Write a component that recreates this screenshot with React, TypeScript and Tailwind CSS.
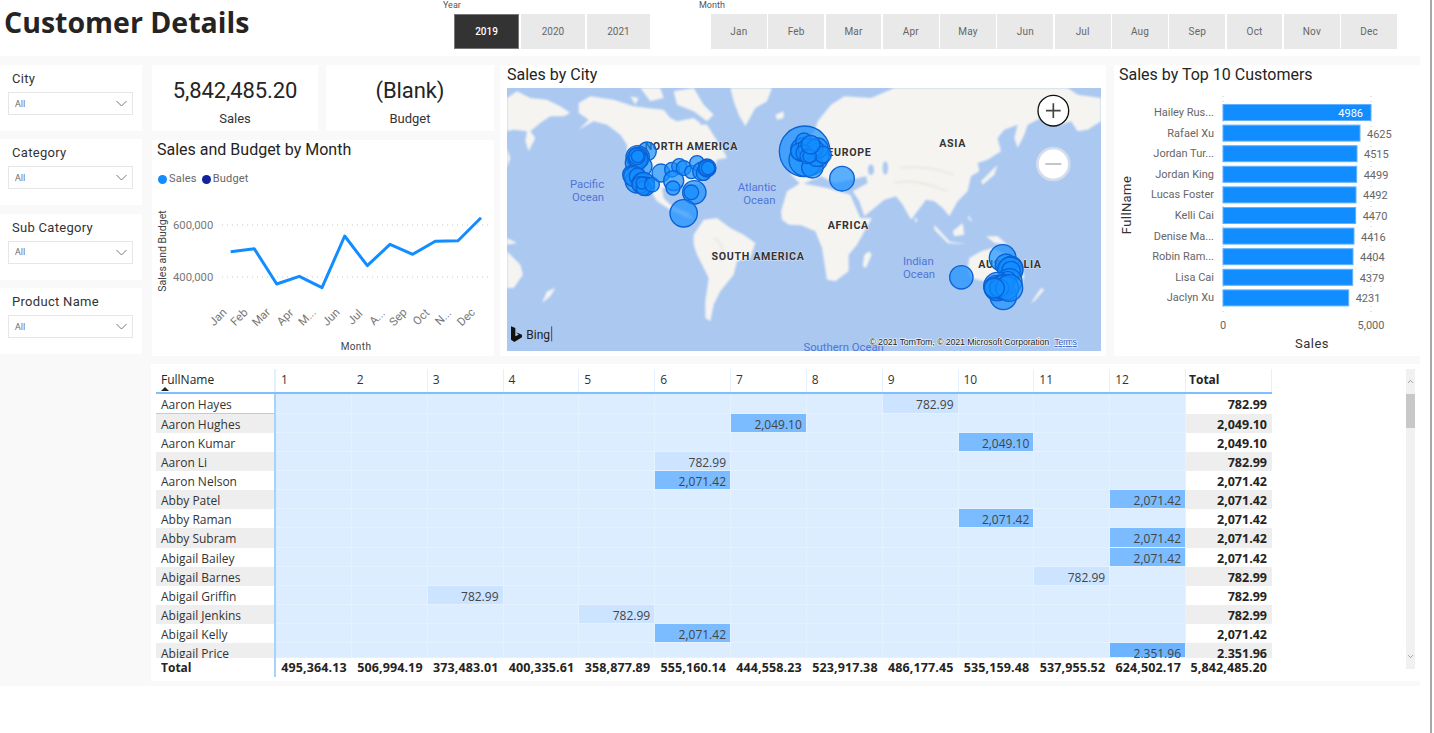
import { ChevronUp, ChevronDown } from "lucide-react";

const din = "font-[Roboto,sans-serif]";
const seg = "font-['Open_Sans',sans-serif]";

const months = ["Jan", "Feb", "Mar", "Apr", "May", "Jun", "Jul", "Aug", "Sep", "Oct", "Nov", "Dec"];

function Slicer({ title }: { title: string }) {
  return (
    <div className="h-[66px] bg-white pl-2 pr-[9px] pt-[5px]">
      <div className={`${din} pl-1 text-[13px] leading-[17px] tracking-[0.3px] text-[#333]`}>{title}</div>
      <div className="mt-[5px] flex h-[23px] items-center justify-between border border-[#e6e6e6] pl-[6px] pr-[5px]">
        <span className={`${seg} text-[9px] text-[#666]`}>All</span>
        <svg width="11" height="7" viewBox="0 0 11 7" fill="none" stroke="#777" strokeWidth="1">
          <path d="M0.5 1 L5.5 6 L10.5 1" />
        </svg>
      </div>
    </div>
  );
}

function Kpi({ value, label, className }: { value: string; label: string; className: string }) {
  return (
    <div className={`${din} flex h-[66px] flex-col items-center bg-white text-[#252423] ${className}`}>
      <div className="mt-[10px] text-[22px] leading-[32px] tracking-[-0.1px]">{value}</div>
      <div className="mt-[4px] text-[13px] leading-[16px] text-[#333]">{label}</div>
    </div>
  );
}

const linePts =
  "230.7,251.7 254.3,248.7 276.7,284 299.3,276.3 322,287.7 344.7,236 367.3,265.7 390,244.3 412.7,254.3 435.3,241.3 458,240.7 481,217.7";
const monthLabels: [string, number][] = [
  ["Jan", 218], ["Feb", 239], ["Mar", 261], ["Apr", 285], ["M...", 307], ["Jun", 331],
  ["Jul", 355], ["A...", 377], ["Sep", 398], ["Oct", 421], ["N...", 443], ["Dec", 466],
];

function LineChart() {
  return (
    <div className={`${din} h-[216px] bg-white`}>
      <div className="h-[24px] pl-[5px] text-[16px] leading-[20px] text-[#252423]">Sales and Budget by Month</div>
      <div className="flex h-[30px] items-center pl-[6px] text-[11px] tracking-[0.2px] text-[#666]">
        <span className="h-[9px] w-[9px] rounded-full bg-[#118dff]" />
        <span className="ml-[2px]">Sales</span>
        <span className="ml-[5px] h-[9px] w-[9px] rounded-full bg-[#12239e]" />
        <span className="ml-[2px]">Budget</span>
      </div>
      <svg width="342" height="162" viewBox="152 194 342 162" className="block">
        <line x1="222" y1="225" x2="488" y2="225" stroke="#c8c8c8" strokeDasharray="1 4" />
        <line x1="222" y1="277" x2="488" y2="277" stroke="#c8c8c8" strokeDasharray="1 4" />
        <text x="173" y="229" fontSize="11.3" fill="#777">600,000</text>
        <text x="173" y="281" fontSize="11.3" fill="#777">400,000</text>
        <text x="166" y="251" fontSize="10.5" fill="#444" textAnchor="middle" transform="rotate(-90 166 251)">Sales and Budget</text>
        <polyline points={linePts} fill="none" stroke="#118dff" strokeWidth="3" strokeLinejoin="round" />
        {monthLabels.map(([m, x]) => (
          <text key={m} x={x} y="321" fontSize="11.5" fill="#777" textAnchor="middle" transform={`rotate(-45 ${x} 317)`}>{m}</text>
        ))}
        <text x="356" y="350" fontSize="10" fill="#444" textAnchor="middle" letterSpacing="0.4">Month</text>
      </svg>
    </div>
  );
}

type C = [number, number, number];
const bubbles: C[] = [
  [420, 190, 28], [392, 208, 35], [385, 225, 30], [405, 235, 30], [392, 208, 30], [395, 215, 28], [390, 205, 25], [392, 205, 19], [375, 260, 28],
  [390, 280, 35], [380, 265, 30], [392, 265, 25], [405, 285, 30], [410, 285, 32], [415, 295, 28], [400, 290, 25], [410, 300, 22], [405, 285, 18], [435, 290, 22],
  [462, 255, 27], [495, 245, 22], [517, 235, 23], [500, 278, 30], [530, 240, 22], [498, 300, 21], [553, 252, 20],
  [570, 225, 22], [585, 250, 28], [590, 255, 22], [600, 240, 27], [600, 240, 24], [603, 240, 20], [562, 313, 35], [553, 313, 22], [530, 376, 41],
  [893, 190, 76], [896, 215, 50], [916, 238, 32], [886, 185, 35], [916, 190, 30], [931, 200, 35], [891, 160, 25], [876, 190, 25], [901, 180, 28], [933, 180, 30],
  [923, 180, 25], [948, 200, 25], [891, 195, 24], [901, 205, 22], [908, 205, 20], [911, 170, 28],
  [1005, 272, 37], [1363, 568, 35],
  [1487, 510, 40], [1497, 530, 32], [1512, 540, 35], [1510, 545, 38], [1512, 548, 28], [1507, 580, 38], [1502, 575, 25], [1489, 625, 40],
  [1472, 595, 42], [1470, 600, 38], [1482, 598, 35], [1490, 590, 30], [1500, 600, 35], [1477, 600, 28], [1507, 600, 40], [1462, 600, 30],
];

const land = [
  // far east russia, left edge
  "0,30 30,10 70,30 120,35 160,55 190,75 170,85 130,85 100,105 70,130 85,150 65,190 55,160 60,130 20,125 0,130",
  // north america
  "215,45 250,25 320,35 380,55 420,60 470,65 490,90 510,100 560,90 580,105 575,130 570,110 600,110 625,150 650,190 660,210 630,215 620,250 590,280 560,290 530,290 490,300 465,300 470,330 490,350 510,360 545,375 560,395 530,385 490,365 450,340 420,290 380,250 360,210 360,170 340,140 300,110 260,100 215,125 245,95 215,75",
  "400,0 460,0 470,30 430,40", "500,10 560,0 590,50 620,80 600,100 560,70 510,50", "370,25 395,30 385,50",
  // greenland, iceland
  "670,0 795,0 780,40 745,60 715,115 695,80 680,40", "805,80 830,70 830,90 810,95",
  // south america
  "560,440 590,395 630,390 670,420 710,440 745,465 730,510 690,520 680,560 640,610 620,650 610,700 595,690 595,640 605,570 570,500 560,470",
  // africa, madagascar
  "822,370 840,310 880,285 960,300 1030,320 1060,390 1095,390 1050,470 1025,500 1025,550 985,580 960,575 945,480 925,430 882,412 845,410 825,395",
  "1087,490 1094,500 1077,540 1067,535 1072,500",
  // eurasia
  "852,260 847,200 882,180 922,130 932,100 972,50 1012,25 1092,30 1162,0 1682,0 1712,20 1782,30 1782,100 1742,125 1712,130 1692,100 1662,110 1602,90 1562,110 1552,140 1532,180 1522,150 1532,110 1492,125 1472,150 1482,190 1442,215 1412,225 1417,250 1392,265 1382,310 1352,340 1327,385 1307,360 1282,340 1257,335 1212,395 1187,350 1167,325 1132,335 1072,385 1057,340 1037,310 1082,285 1077,265 1032,275 982,285 942,265 882,290",
  // japan
  "1472,230 1462,260 1427,290 1422,280 1452,250",
  // islands
  "1282,410 1332,465 1322,465 1282,425", "1337,430 1367,405 1372,440 1342,445", "1322,460 1382,468 1322,466",
  "1437,445 1472,445 1502,470 1462,465", "1382,380 1397,400 1385,395", "1222,388 1232,395 1226,405",
  // australia, nz
  "1387,510 1422,490 1457,480 1522,510 1552,560 1542,600 1502,620 1472,600 1432,580 1392,570 1382,540",
  "1602,600 1612,605 1582,640 1572,645", "0,490 40,530 48,560 20,600 0,600", "145,600 130,625 105,645 120,610",
  "0,450 30,465 0,470", "0,180 10,210 0,240",
];

function MapLabel({ x, y, children }: { x: number; y: number; children: string }) {
  return (
    <text x={x} y={y} textAnchor="middle" fontSize="32" fontWeight="700" fill="#333" letterSpacing="2" stroke="#fff" strokeWidth="3" paintOrder="stroke" strokeOpacity="0.6">
      {children}
    </text>
  );
}

function OceanLabel({ x, y, children }: { x: number; y: number; children: string }) {
  return <text x={x} y={y} textAnchor="middle" fontSize="34" fill="#4f76d6">{children}</text>;
}

function WorldMap() {
  return (
    <svg width="594" height="263" viewBox="0 0 1782 789" className={`${din} block`}>
      <defs>
        <filter id="soft" x="-2%" y="-2%" width="104%" height="104%" colorInterpolationFilters="sRGB">
          <feGaussianBlur stdDeviation="2.5" />
        </filter>
      </defs>
      <rect width="1782" height="789" fill="#abc8f1" />
      <g fill="#f5f4f0" filter="url(#soft)">
        {land.map((p, i) => <polygon key={i} points={p} />)}
        <ellipse cx="1092" cy="245" rx="9" ry="16" fill="#abc8f1" />
        <ellipse cx="1135" cy="240" rx="8" ry="20" fill="#abc8f1" />
      </g>
      <g fill="none" stroke="#e8e7e2" strokeWidth="5" filter="url(#soft)">
        <path d="M1160 285 Q1230 270 1320 310" />
        <path d="M1180 240 Q1260 230 1340 260" />
        <path d="M620 450 Q660 470 640 520" />
      </g>
      <OceanLabel x={240} y={301}>Pacific</OceanLabel>
      <OceanLabel x={243} y={340}>Ocean</OceanLabel>
      <OceanLabel x={750} y={309}>Atlantic</OceanLabel>
      <OceanLabel x={757} y={347}>Ocean</OceanLabel>
      <OceanLabel x={1234} y={531}>Indian</OceanLabel>
      <OceanLabel x={1236} y={569}>Ocean</OceanLabel>
      <OceanLabel x={1010} y={788}>Southern Ocean</OceanLabel>
      <MapLabel x={553} y={187}>NORTH AMERICA</MapLabel>
      <MapLabel x={1027} y={204}>EUROPE</MapLabel>
      <MapLabel x={1337} y={176}>ASIA</MapLabel>
      <MapLabel x={1024} y={424}>AFRICA</MapLabel>
      <MapLabel x={753} y={516}>SOUTH AMERICA</MapLabel>
      <MapLabel x={1509} y={541}>AUSTRALIA</MapLabel>
      <g fill="#118dff" fillOpacity="0.68" stroke="#0a62d6" strokeWidth="4">
        {bubbles.map(([x, y, r], i) => <circle key={i} cx={x} cy={y} r={r} />)}
      </g>
      <circle cx="1639" cy="68" r="46" fill="#fff" stroke="#111" strokeWidth="4" />
      <path d="M1639 46 V90 M1617 68 H1661" stroke="#444" strokeWidth="5" />
      <circle cx="1639" cy="228" r="48" fill="#fff" stroke="#d3dcec" strokeWidth="8" />
      <path d="M1615 228 H1663" stroke="#bbb" strokeWidth="5" />
      <path d="M12 715 L25 720 V745 L35 740 L27 733 L45 740 V748 L22 762 L12 755 Z" fill="#111" />
      <text x="58" y="752" fontSize="36" fill="#222">Bing</text>
      <line x1="134" y1="715" x2="134" y2="760" stroke="#111" strokeWidth="2" />
      <g className="font-['Liberation_Sans',sans-serif]" fontSize="27" stroke="#fff" strokeWidth="4" paintOrder="stroke" strokeOpacity="0.8">
        <text x="1087" y="771" fill="#222" textLength="540">© 2021 TomTom, © 2021 Microsoft Corporation</text>
        <text x="1642" y="771" fill="#3b5bc8" textDecoration="underline" textLength="68">Terms</text>
      </g>
    </svg>
  );
}

const customers: [string, number, string][] = [
  ["Hailey Rus...", 1371, "4986"], ["Rafael Xu", 1360, "4625"], ["Jordan Tur...", 1357, "4515"], ["Jordan King", 1356.7, "4499"],
  ["Lucas Foster", 1356, "4492"], ["Kelli Cai", 1355.7, "4470"], ["Denise Ma...", 1354, "4416"], ["Robin Ram...", 1353, "4404"],
  ["Lisa Cai", 1352.7, "4379"], ["Jaclyn Xu", 1348.7, "4231"],
];

function BarChart() {
  return (
    <div className={`${din} h-[291px] w-[306px] bg-white`}>
      <div className="h-[23px] pl-[5px] text-[16px] leading-[20px] text-[#252423]">Sales by Top 10 Customers</div>
      <svg width="306" height="268" viewBox="1114 88 306 268" className="block">
        <line x1="1223" y1="96" x2="1223" y2="316" stroke="#c8c8c8" strokeDasharray="1 4" />
        <line x1="1371" y1="96" x2="1371" y2="316" stroke="#c8c8c8" strokeDasharray="1 4" />
        {customers.map(([name, end, val], i) => {
          const y = 104.5 + i * 20.6;
          return (
            <g key={name}>
              <rect x="1223" y={y} width={end - 1223} height="16" fill="#118dff" stroke="#62b2ff" strokeWidth="1" />
              <text x="1214" y={y + 11.5} fontSize="11" fill="#666" textAnchor="end">{name}</text>
              <text
                x={i === 0 ? 1363 : end + 7}
                y={y + 12.5}
                fontSize="11"
                fill={i === 0 ? "#fff" : "#666"}
                textAnchor={i === 0 ? "end" : "start"}
              >
                {val}
              </text>
            </g>
          );
        })}
        <text x="1223" y="329" fontSize="11" fill="#666" textAnchor="middle">0</text>
        <text x="1371" y="329" fontSize="11" fill="#666" textAnchor="middle">5,000</text>
        <text x="1312" y="348" fontSize="13" fill="#333" textAnchor="middle" letterSpacing="0.5">Sales</text>
        <text x="1131" y="205" fontSize="13" fill="#333" textAnchor="middle" letterSpacing="0.4" transform="rotate(-90 1131 205)">FullName</text>
      </svg>
    </div>
  );
}

type Hit = { m: number; v: string; bg: string };
const low = "bg-[#cce4ff]";
const high = "bg-[#7abcff]";
const rows: { name: string; total: string; h: string; hit: Hit[] }[] = [
  { name: "Aaron Hayes", total: "782.99", h: "h-[20px]", hit: [{ m: 9, v: "782.99", bg: low }] },
  { name: "Aaron Hughes", total: "2,049.10", h: "h-[19px]", hit: [{ m: 7, v: "2,049.10", bg: high }] },
  { name: "Aaron Kumar", total: "2,049.10", h: "h-[19px]", hit: [{ m: 10, v: "2,049.10", bg: high }] },
  { name: "Aaron Li", total: "782.99", h: "h-[19px]", hit: [{ m: 6, v: "782.99", bg: low }] },
  { name: "Aaron Nelson", total: "2,071.42", h: "h-[19px]", hit: [{ m: 6, v: "2,071.42", bg: high }] },
  { name: "Abby Patel", total: "2,071.42", h: "h-[19px]", hit: [{ m: 12, v: "2,071.42", bg: high }] },
  { name: "Abby Raman", total: "2,071.42", h: "h-[19px]", hit: [{ m: 10, v: "2,071.42", bg: high }] },
  { name: "Abby Subram", total: "2,071.42", h: "h-[20px]", hit: [{ m: 12, v: "2,071.42", bg: high }] },
  { name: "Abigail Bailey", total: "2,071.42", h: "h-[19px]", hit: [{ m: 12, v: "2,071.42", bg: high }] },
  { name: "Abigail Barnes", total: "782.99", h: "h-[19px]", hit: [{ m: 11, v: "782.99", bg: low }] },
  { name: "Abigail Griffin", total: "782.99", h: "h-[19px]", hit: [{ m: 3, v: "782.99", bg: low }] },
  { name: "Abigail Jenkins", total: "782.99", h: "h-[19px]", hit: [{ m: 5, v: "782.99", bg: low }] },
  { name: "Abigail Kelly", total: "2,071.42", h: "h-[19px]", hit: [{ m: 6, v: "2,071.42", bg: high }] },
  { name: "Abigail Price", total: "2,351.96", h: "h-[15px]", hit: [{ m: 12, v: "2,351.96", bg: "bg-[#6cb4ff]" }] },
];
const totals = [
  "495,364.13", "506,994.19", "373,483.01", "400,335.61", "358,877.89", "555,160.14",
  "444,558.23", "523,917.38", "486,177.45", "535,159.48", "537,955.52", "624,502.17",
];
const grid = "grid w-[1116px] grid-cols-[120px_repeat(12,1fr)_86px]";

function Matrix() {
  return (
    <div className={`${seg} w-[1116px] text-[12px] leading-[19px] text-[#333]`}>
      <div className={`${grid} h-[25px] border-b-2 border-[#7fbfff]`}>
        <div className="relative border-r-2 border-[#e3f0ff] pl-[5px] pt-[1px] text-[#252423]">
          FullName
          <span className="absolute bottom-[1px] left-[5px] h-0 w-0 border-x-4 border-b-4 border-x-transparent border-b-[#222]" />
        </div>
        {months.map((_, i) => (
          <div key={i} className={`pl-[5px] pt-[1px] ${i === 0 ? "" : "border-r border-[#e3f0ff]"}`}>{i + 1}</div>
        ))}
        <div className="border-r border-[#e3f0ff] pl-[3px] pt-[1px] font-bold text-[#252423]">Total</div>
      </div>
      {rows.map((r, ri) => (
        <div key={r.name} className={`${grid} ${r.h} grid-rows-1 overflow-hidden`}>
          <div className={`border-r-2 border-[#a6d2fb] pl-[5px] pt-[1px] ${ri === 0 ? "border-b border-b-[#a6d2fb]" : ""} ${ri % 2 ? "bg-[#eee]" : "bg-white"}`}>{r.name}</div>
          {months.map((_, i) => {
            const hit = r.hit.find((h) => h.m === i + 1);
            return (
              <div key={i} className={`border-b border-r border-[#e4f1ff] pr-[4px] pt-[1px] text-right text-[#444] ${hit ? hit.bg : "bg-[#dcedff]"}`}>
                {hit?.v}
              </div>
            );
          })}
          <div className={`pr-[5px] pt-[1px] text-right text-[12.5px] font-bold text-[#252423] ${ri % 2 ? "bg-[#eee]" : "bg-white"}`}>{r.total}</div>
        </div>
      ))}
      <div className={`${grid} h-[19px] text-[12.5px] font-bold text-[#252423]`}>
        <div className="border-r-2 border-[#a6d2fb] pl-[5px] text-[12px]">Total</div>
        {totals.map((t) => (
          <div key={t} className="pr-[5px] text-right tracking-[0.12px]">{t}</div>
        ))}
        <div className="pr-[5px] text-right tracking-[0.12px]">5,842,485.20</div>
      </div>
    </div>
  );
}

function ScrollBar() {
  return (
    <div className="ml-[134px] flex h-[300px] w-[9px] flex-col bg-[#f1f1f1]">
      <div className="flex h-[25px] items-center justify-center">
        <ChevronUp size={9} strokeWidth={1.5} color="#666" />
      </div>
      <div className="h-[34px] bg-[#c8c8c8]" />
      <div className="flex-1" />
      <div className="flex h-[25px] items-center justify-center">
        <ChevronDown size={9} strokeWidth={1.5} color="#666" />
      </div>
    </div>
  );
}

export default function App() {
  return (
    <div className="flex h-[733px] w-[1434px] overflow-hidden bg-white">
      <div className="w-[1420px]">
        {/* Header */}
        <div className="flex h-[56px]">
          <div className={`${seg} w-[443px] pl-1 text-[28.5px] font-bold leading-[44px] text-[#252423]`}>Customer Details</div>
          <div className={`${din} w-[256px]`}>
            <div className="h-[14px] text-[9px] leading-[11px] text-[#555]">Year</div>
            <div className="flex gap-[2px] pl-[11px]">
              <div className="flex h-[35px] w-[65px] items-center justify-center border border-[#777] bg-[#333] text-[10px] font-medium text-white">2019</div>
              <div className="flex h-[35px] w-[64px] items-center justify-center bg-[#e9e9e9] text-[10px] text-[#666]">2020</div>
              <div className="flex h-[35px] w-[63px] items-center justify-center bg-[#e9e9e9] text-[10px] text-[#666]">2021</div>
            </div>
          </div>
          <div className={`${din} flex-1`}>
            <div className="h-[14px] text-[9px] leading-[11px] text-[#555]">Month</div>
            <div className="flex w-[698px] gap-[1.5px] pl-[12px]">
              {months.map((m) => (
                <div key={m} className="flex h-[35px] flex-1 items-center justify-center bg-[#e9e9e9] text-[10px] tracking-[0.2px] text-[#666]">{m}</div>
              ))}
            </div>
          </div>
        </div>

        {/* Report canvas */}
        <div className="h-[630px] bg-[#f9f9f9] pt-[9px]">
          <div className="flex h-[291px]">
            <div className="flex w-[142px] flex-col gap-[8.33px]">
              <Slicer title="City" />
              <Slicer title="Category" />
              <Slicer title="Sub Category" />
              <Slicer title="Product Name" />
            </div>
            <div className="ml-[10px] flex w-[342px] flex-col gap-[9px]">
              <div className="flex gap-2">
                <Kpi value="5,842,485.20" label="Sales" className="w-[166px]" />
                <Kpi value="(Blank)" label="Budget" className="w-[168px]" />
              </div>
              <LineChart />
            </div>
            <div className={`${din} ml-[6px] w-[606px] bg-white pl-[7px] pr-[5px]`}>
              <div className="h-[23px] text-[16px] leading-[20px] text-[#252423]">Sales by City</div>
              <WorldMap />
            </div>
            <div className="ml-2">
              <BarChart />
            </div>
          </div>

          <div className="ml-[151px] mt-2 flex h-[317px] bg-white pl-[5px] pt-[5px]">
            <Matrix />
            <ScrollBar />
          </div>
        </div>
      </div>
      <div className="ml-[10px] w-[2px] bg-[#a8a8a8]" />
    </div>
  );
}
